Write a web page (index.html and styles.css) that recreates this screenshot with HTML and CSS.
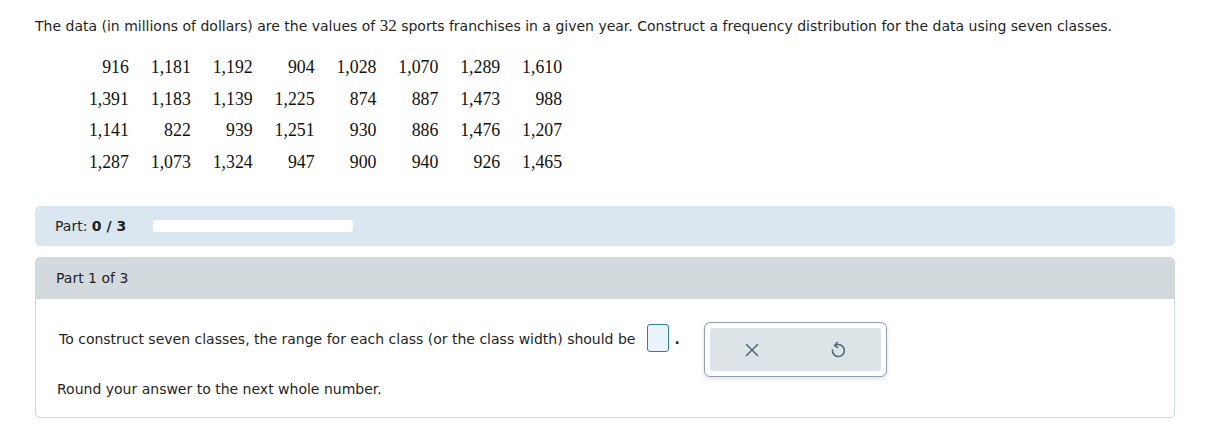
FILE: index.html
```html
<!DOCTYPE html>
<html>
<head>
<meta charset="utf-8">
<link rel="stylesheet" href="styles.css">
</head>
<body>
<div class="page">
  <p class="prompt">The data (in millions of dollars) are the values of <span class="num">32</span> sports franchises in a given year. Construct a frequency distribution for the data using seven classes.</p>
  <div class="data">
    <span>916</span><span>1,181</span><span>1,192</span><span>904</span><span>1,028</span><span>1,070</span><span>1,289</span><span>1,610</span>
    <span>1,391</span><span>1,183</span><span>1,139</span><span>1,225</span><span>874</span><span>887</span><span>1,473</span><span>988</span>
    <span>1,141</span><span>822</span><span>939</span><span>1,251</span><span>930</span><span>886</span><span>1,476</span><span>1,207</span>
    <span>1,287</span><span>1,073</span><span>1,324</span><span>947</span><span>900</span><span>940</span><span>926</span><span>1,465</span>
  </div>
  <div class="progress">
    <span class="label">Part: <b>0 / 3</b></span>
    <span class="bar"></span>
  </div>
  <div class="card">
    <div class="card-head">Part 1 of 3</div>
    <div class="card-body">
      <div class="question">
        <span class="qtext">To construct seven classes, the range for each class (or the class width) should be</span>
        <span class="answer"></span><span class="dot">.</span>
        <div class="tools">
          <div class="tools-inner">
            <svg class="icon" width="14" height="14" viewBox="0 0 14 14"><path d="M1.5 1.5 L12.5 12.5 M12.5 1.5 L1.5 12.5" stroke="#4f6e7a" stroke-width="1.6" fill="none" stroke-linecap="round"/></svg>
            <svg class="icon" width="16" height="18" viewBox="0 0 16 18"><path d="M5 4.6 A6 6 0 1 1 2.4 9" stroke="#4f6e7a" stroke-width="1.6" fill="none" stroke-linecap="round"/><path d="M7.2 1.4 L4.6 4.6 L7.8 6.6" stroke="#4f6e7a" stroke-width="1.6" fill="none" stroke-linecap="round" stroke-linejoin="round"/></svg>
          </div>
        </div>
      </div>
      <p class="hint">Round your answer to the next whole number.</p>
    </div>
  </div>
</div>
</body>
</html>
```
FILE: styles.css
```css
html, body {
  margin: 0;
  padding: 0;
  background: #ffffff;
}
.page {
  padding: 17px 40px 0 35px;
  font-family: Verdana, "DejaVu Sans", sans-serif;
  font-size: 14px;
  color: #1f1f1f;
}
.prompt {
  margin: 0;
  line-height: 18px;
}
.num {
  font-family: "Liberation Serif", serif;
  font-size: 17px;
}
.data {
  display: grid;
  grid-template-columns: repeat(8, 61.9px);
  grid-auto-rows: 31.5px;
  margin: 17px 0 0 32px;
  font-family: "Liberation Serif", serif;
  font-size: 17.8px;
  line-height: 31.5px;
  color: #111;
}
.data span {
  text-align: right;
}
.progress {
  margin-top: 28px;
  height: 40px;
  background: #dae6f0;
  border-radius: 5px;
  display: flex;
  align-items: center;
  padding-left: 20px;
}
.label {
  width: 98px;
}
.bar {
  width: 200px;
  height: 12px;
  background: #ffffff;
  border-radius: 3px;
}
.card {
  margin-top: 11px;
  border: 1px solid #cfd8db;
  border-radius: 5px;
  overflow: hidden;
  height: 159px;
}
.card-head {
  background: #d3dadd;
  height: 41px;
  line-height: 41px;
  padding-left: 20px;
}
.card-body {
  padding: 23px 0 0 23px;
}
.question {
  display: flex;
  align-items: flex-start;
}
.qtext {
  margin-top: 8px;
  line-height: 18px;
}
.answer {
  width: 20px;
  height: 26px;
  margin: 2px 0 0 12px;
  border: 1px solid #2f8292;
  border-radius: 3px;
  background: #e8f4f9;
}
.dot {
  margin: 8px 0 0 5px;
  line-height: 18px;
  font-weight: bold;
}
.tools {
  margin-left: 24px;
  width: 183px;
  height: 55px;
  border: 1px solid #8fa2ab;
  border-radius: 6px;
  background: #fff;
  box-shadow: 0 2px 5px rgba(0,0,0,0.12);
  padding: 5px;
  box-sizing: border-box;
}
.tools-inner {
  height: 100%;
  background: #dde4e7;
  border-radius: 3px;
  display: flex;
  align-items: center;
  justify-content: space-around;
}
.icon {
  display: block;
}
.hint {
  margin: 3px 0 0 -2px;
  line-height: 18px;
}
```
